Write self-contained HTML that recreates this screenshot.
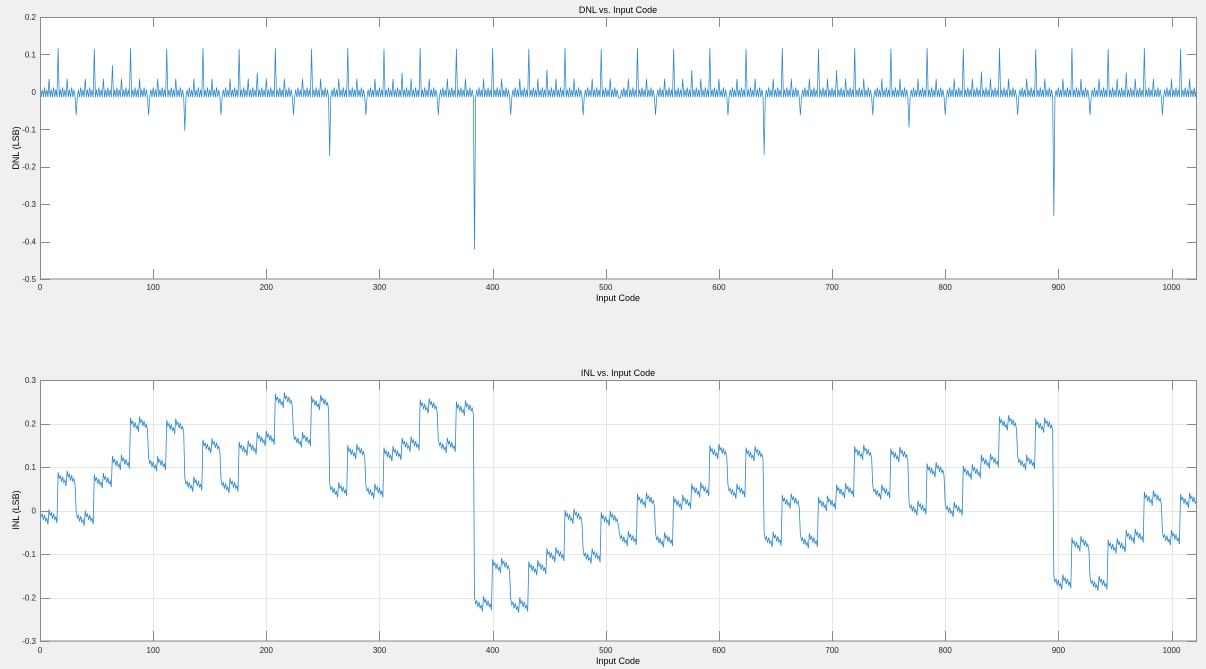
<!DOCTYPE html>
<html><head><meta charset="utf-8"><style>
html,body{margin:0;padding:0;background:#f0f0f0;}
svg{display:block;font-family:"Liberation Sans",sans-serif;}
.t{font-size:8px;fill:#262626;}
.ti{font-size:9px;fill:#000;}
</style></head><body>
<svg id="s" width="1206" height="669" viewBox="0 0 1206 669" xmlns="http://www.w3.org/2000/svg">
<rect x="0" y="0" width="1206" height="669" fill="#f0f0f0"/>
<rect x="40" y="17" width="1157" height="262" fill="#fff"/>
<rect x="40" y="380" width="1157" height="261" fill="#fff"/>
<g id="grid" stroke="#e6e6e6" stroke-width="1"></g>
<defs>
<clipPath id="c1"><rect x="40" y="17" width="1157" height="262"/></clipPath>
<clipPath id="c2"><rect x="40" y="380" width="1157" height="261"/></clipPath>
</defs>
<path id="dnl" clip-path="url(#c1)" fill="none" stroke="#2a86cc" stroke-width="0.75" d=""/>
<path id="inl" clip-path="url(#c2)" fill="none" stroke="#2a86cc" stroke-width="0.8" d=""/>
<g id="ticks" stroke="#8a8a8a" stroke-width="1"></g>
<rect x="40.5" y="17.5" width="1156" height="261.5" fill="none" stroke="#8a8a8a"/>
<rect x="40.5" y="380.5" width="1156" height="260.5" fill="none" stroke="#8a8a8a"/>

<text class="ti" x="618" y="13" text-anchor="middle">DNL vs. Input Code</text>
<text class="ti" x="618" y="376" text-anchor="middle">INL vs. Input Code</text>
<text class="ti" x="618" y="301" text-anchor="middle">Input Code</text>
<text class="ti" x="618" y="664" text-anchor="middle">Input Code</text>
<text class="ti" transform="translate(19,148) rotate(-90)" text-anchor="middle">DNL (LSB)</text>
<text class="ti" transform="translate(19,510) rotate(-90)" text-anchor="middle">INL (LSB)</text>

<g class="t" text-anchor="end">
<text x="36" y="20">0.2</text><text x="36" y="57.4">0.1</text><text x="36" y="94.9">0</text>
<text x="36" y="132.3">-0.1</text><text x="36" y="169.7">-0.2</text><text x="36" y="207.2">-0.3</text>
<text x="36" y="244.6">-0.4</text><text x="36" y="282">-0.5</text>
<text x="36" y="383">0.3</text><text x="36" y="426.5">0.2</text><text x="36" y="470">0.1</text>
<text x="36" y="513.5">0</text><text x="36" y="557">-0.1</text><text x="36" y="600.5">-0.2</text>
<text x="36" y="644">-0.3</text>
</g>
<g class="t" text-anchor="middle">
<text x="40" y="290">0</text><text x="153.2" y="290">100</text><text x="266.3" y="290">200</text><text x="379.5" y="290">300</text><text x="492.6" y="290">400</text><text x="605.8" y="290">500</text><text x="718.9" y="290">600</text><text x="832.1" y="290">700</text><text x="945.2" y="290">800</text><text x="1058.4" y="290">900</text><text x="1171.5" y="290">1000</text>
<text x="40" y="653">0</text><text x="153.2" y="653">100</text><text x="266.3" y="653">200</text><text x="379.5" y="653">300</text><text x="492.6" y="653">400</text><text x="605.8" y="653">500</text><text x="718.9" y="653">600</text><text x="832.1" y="653">700</text><text x="945.2" y="653">800</text><text x="1058.4" y="653">900</text><text x="1171.5" y="653">1000</text>
</g>
</svg>
<script>
(function(){
var X=function(c){return 40+c*1.1315;};
var Yt=function(v){return 91.9-374.3*v;};
var Yb=function(v){return 510.5-435*v;};
var G=[0,0.125,0.075,0.18,0.062,0.167,-0.2,-0.087,-0.05,0.062,-0.052,0.06,0.02,0.128,-0.15,-0.045];
var P=[0,0.088,-0.003,0.083];
var r=[0];
for(var j=1;j<16;j++){
  var d=(j%2)?-0.014:0.006;
  if(j==4||j==12)d=0.012;
  if(j==8)d=0.035;
  r.push(r[j-1]+d);
}
var inl=[];
for(var c=0;c<1024;c++){
  var g=c>>6,b=(c>>4)&3,k=c&15;
  inl.push(G[g]+P[b]+r[k]);
}
var s="";
for(var c=0;c<1024;c++){s+=(c?"L":"M")+X(c).toFixed(2)+" "+Yb(inl[c]).toFixed(2);}
document.getElementById("inl").setAttribute("d",s);
s="";
for(var c=1;c<1024;c++){var v=inl[c]-inl[c-1];s+=(c>1?"L":"M")+X(c).toFixed(2)+" "+Yt(v).toFixed(2);}
document.getElementById("dnl").setAttribute("d",s);
var NS="http://www.w3.org/2000/svg";
function ln(p,x1,y1,x2,y2){var e=document.createElementNS(NS,"line");e.setAttribute("x1",x1);e.setAttribute("y1",y1);e.setAttribute("x2",x2);e.setAttribute("y2",y2);p.appendChild(e);}
var gr=document.getElementById("grid"),tk=document.getElementById("ticks");
for(var i=0;i<=10;i++){
  var x=Math.round(X(i*100))+0.5;
  ln(gr,x,380,x,641);
  ln(tk,x,17,x,27);ln(tk,x,279,x,269);
  ln(tk,x,380,x,390);ln(tk,x,641,x,631);
}
for(var i=0;i<8;i++){
  var y=Math.round(Yt(0.2-0.1*i))+0.5;
  ln(tk,40,y,50,y);ln(tk,1197,y,1187,y);
}
for(var i=0;i<7;i++){
  var y=Math.round(Yb(0.3-0.1*i))+0.5;
  ln(gr,40,y,1197,y);
  ln(tk,40,y,50,y);ln(tk,1197,y,1187,y);
}
})();
</script>
</body></html>
